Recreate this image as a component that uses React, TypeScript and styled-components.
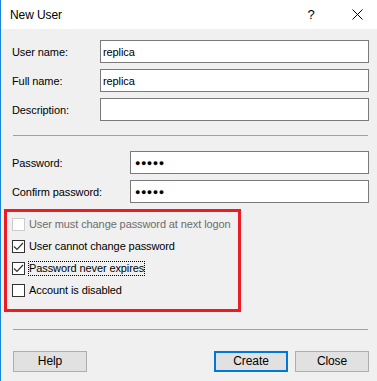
import React from "react";
import styled, { createGlobalStyle } from "styled-components";

const GlobalStyle = createGlobalStyle`
  body {
    margin: 0;
    font-family: "Liberation Sans", Arial, sans-serif;
    font-size: 11px;
    letter-spacing: -0.1px;
  }
`;

const Window = styled.div`
  width: 377px;
  height: 381px;
  box-sizing: border-box;
  background-color: #f0f0f0;
  border-left: 1px solid #1883d7;
  display: flex;
  flex-direction: column;
  overflow: hidden;
  white-space: nowrap;
`;

const TitleBar = styled.div`
  height: 29px;
  flex-shrink: 0;
  background-color: #ffffff;
  display: flex;
  align-items: center;
  padding-left: 9px;
`;

const Title = styled.div`
  flex: 1;
  color: #000;
  font-size: 12px;
`;

const TitleButton = styled.div<{ $width: number }>`
  width: ${(p) => p.$width}px;
  height: 29px;
  display: flex;
  align-items: center;
  justify-content: center;
  color: #000;
  font-size: 13px;
`;

const Body = styled.div`
  display: flex;
  flex-direction: column;
  padding: 11px 8px 0 11px;
`;

// label + textbox rows
const FieldRow = styled.div<{ $labelWidth: number }>`
  display: grid;
  grid-template-columns: ${(p) => p.$labelWidth}px 1fr;
  align-items: center;
  height: 23px;
  flex-shrink: 0;
  margin-bottom: 6px;
`;

const Label = styled.label`
  color: #000;
`;

const TextBox = styled.div`
  height: 23px;
  box-sizing: border-box;
  border: 1px solid #7a7a7a;
  background-color: #fff;
  padding-left: 2px;
  display: flex;
  align-items: center;
  color: #000;
`;

const Dots = styled.span`
  font-size: 9px;
  letter-spacing: 0.5px;
  padding-left: 2px;
`;

const Separator = styled.div<{ $top: number; $bottom: number }>`
  height: 1px;
  flex-shrink: 0;
  background-color: #a0a0a0;
  margin: ${(p) => p.$top}px 1px ${(p) => p.$bottom}px 1px;
`;

const CheckGroup = styled.div`
  width: 237px;
  box-sizing: border-box;
  margin-left: -8px;
  border: 3px solid #ed1c24;
  padding: 1.5px 0 7px 5px;
  display: flex;
  flex-direction: column;
`;

const CheckRow = styled.div<{ $disabled?: boolean }>`
  height: 22px;
  display: flex;
  align-items: center;
  gap: 4px;
  color: ${(p) => (p.$disabled ? "#6d6d6d" : "#000")};
`;

const Box = styled.div<{ $disabled?: boolean }>`
  width: 13px;
  height: 13px;
  flex-shrink: 0;
  box-sizing: border-box;
  border: 1px solid ${(p) => (p.$disabled ? "#cccccc" : "#333333")};
  background-color: #fff;
  display: flex;
  align-items: center;
  justify-content: center;
`;

const CheckText = styled.span<{ $focused?: boolean }>`
  outline: ${(p) => (p.$focused ? "1px dotted #000" : "none")};
  line-height: 13px;
`;

const ButtonRow = styled.div`
  display: flex;
  align-items: center;
  padding-left: 1px;
`;

const Spacer = styled.div`
  flex: 1;
`;

const DialogButton = styled.div<{ $default?: boolean }>`
  width: 74px;
  height: 21px;
  box-sizing: border-box;
  background-color: #e1e1e1;
  border: ${(p) => (p.$default ? "2px solid #0078d7" : "1px solid #adadad")};
  display: flex;
  align-items: center;
  justify-content: center;
  color: #000;
  font-size: 12px;
  margin-left: 7px;
  &:first-child {
    margin-left: 0;
  }
`;

const Check = () => (
  <svg width="11" height="11" viewBox="0 0 11 11">
    <path d="M1 5.5 L4 8.5 L10 2" fill="none" stroke="#333" strokeWidth="1.2" />
  </svg>
);

const checks = [
  { text: "User must change password at next logon", checked: false, disabled: true },
  { text: "User cannot change password", checked: true },
  { text: "Password never expires", checked: true, focused: true },
  { text: "Account is disabled", checked: false },
];

export default function App() {
  return (
    <Window>
      <GlobalStyle />
      <TitleBar>
        <Title>New User</Title>
        <TitleButton $width={52}>?</TitleButton>
        <TitleButton $width={40}>
          <svg width="11" height="11" viewBox="0 0 11 11">
            <path d="M0.5 0.5 L10.5 10.5 M10.5 0.5 L0.5 10.5" stroke="#000" strokeWidth="1" />
          </svg>
        </TitleButton>
      </TitleBar>
      <Body>
        <FieldRow $labelWidth={88}>
          <Label>User name:</Label>
          <TextBox>replica</TextBox>
        </FieldRow>
        <FieldRow $labelWidth={88}>
          <Label>Full name:</Label>
          <TextBox>replica</TextBox>
        </FieldRow>
        <FieldRow $labelWidth={88}>
          <Label>Description:</Label>
          <TextBox />
        </FieldRow>
        <Separator $top={8} $bottom={15} />
        <FieldRow $labelWidth={118}>
          <Label>Password:</Label>
          <TextBox>
            <Dots>●●●●●</Dots>
          </TextBox>
        </FieldRow>
        <FieldRow $labelWidth={118}>
          <Label>Confirm password:</Label>
          <TextBox>
            <Dots>●●●●●</Dots>
          </TextBox>
        </FieldRow>
        <CheckGroup>
          {checks.map((c) => (
            <CheckRow key={c.text} $disabled={c.disabled}>
              <Box $disabled={c.disabled}>{c.checked && <Check />}</Box>
              <CheckText $focused={c.focused}>{c.text}</CheckText>
            </CheckRow>
          ))}
        </CheckGroup>
        <Separator $top={17} $bottom={21} />
        <ButtonRow>
          <DialogButton>Help</DialogButton>
          <Spacer />
          <DialogButton $default>Create</DialogButton>
          <DialogButton>Close</DialogButton>
        </ButtonRow>
      </Body>
    </Window>
  );
}
